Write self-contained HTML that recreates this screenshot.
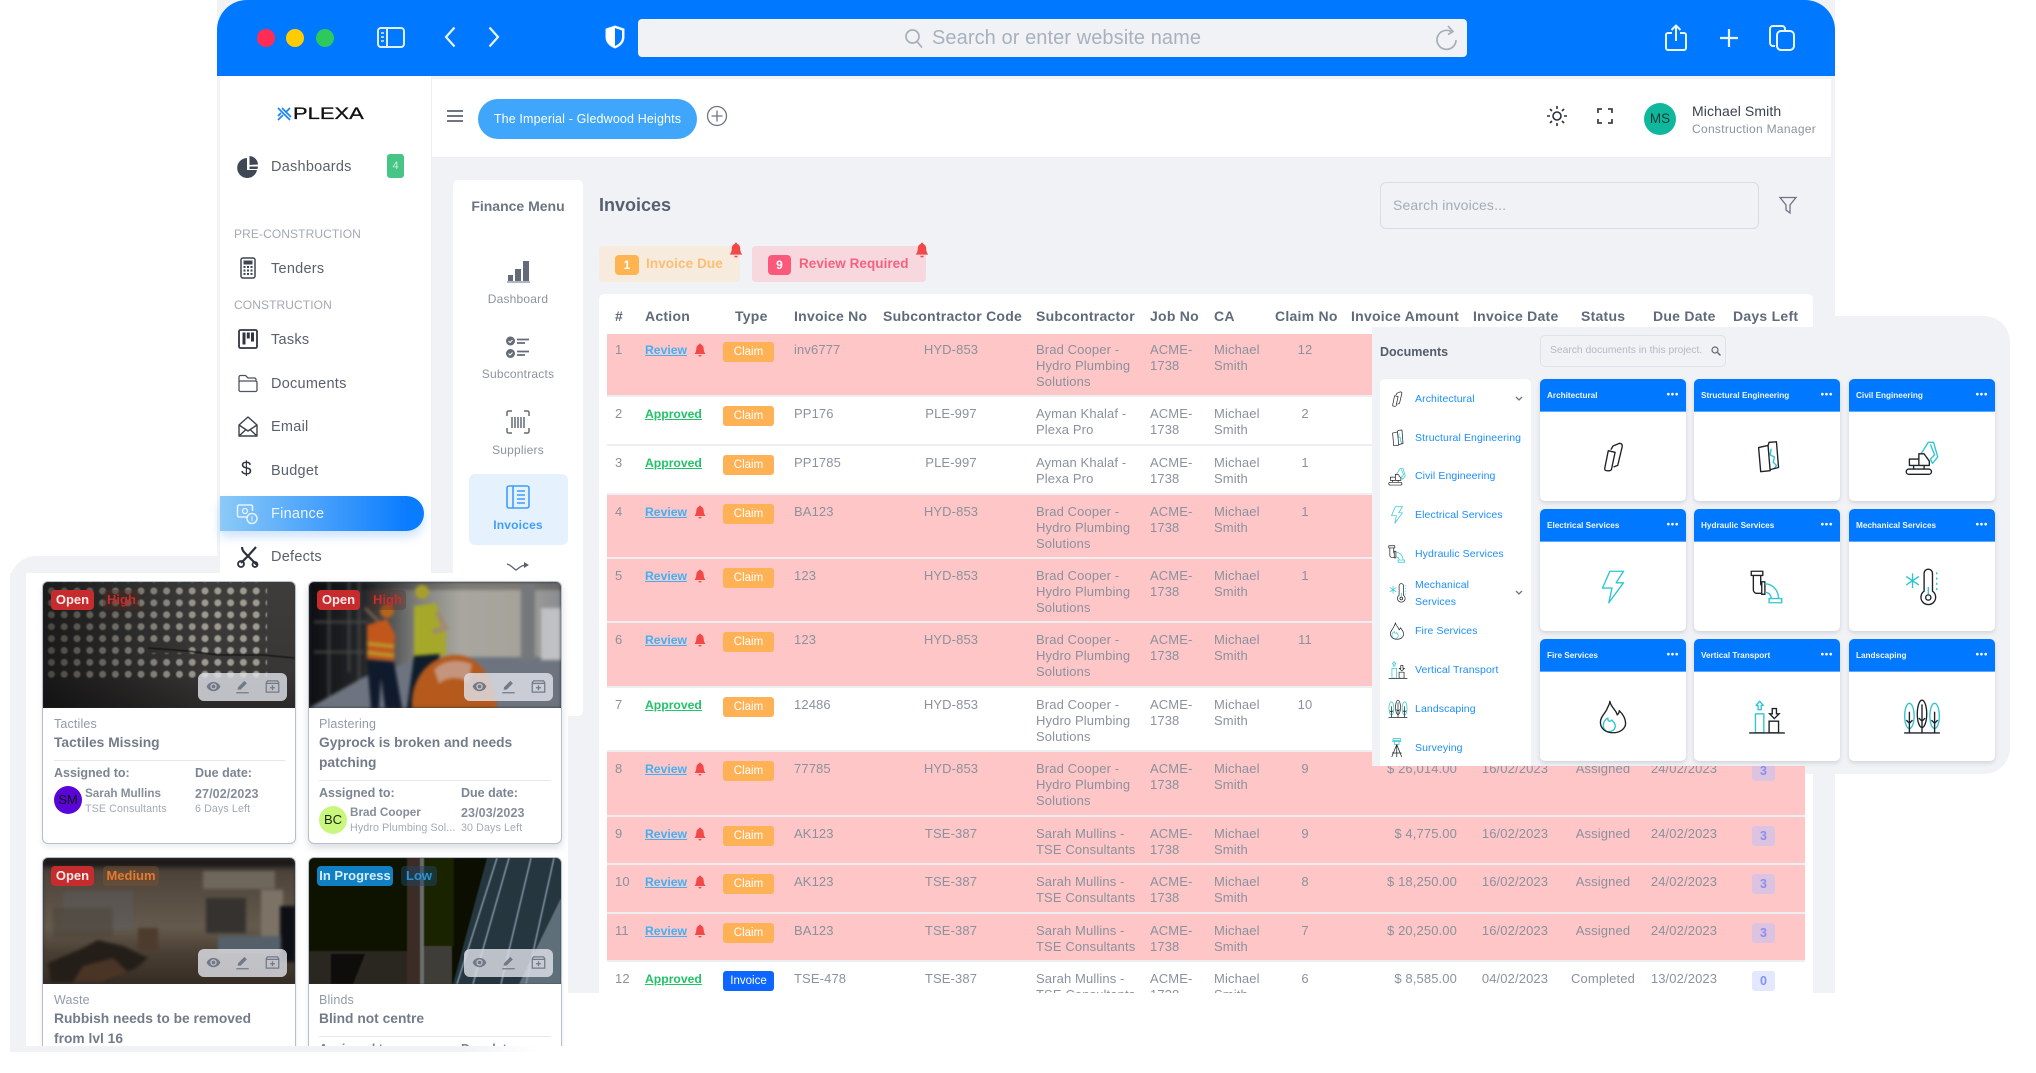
<!DOCTYPE html>
<html><head><meta charset="utf-8"><title>Plexa</title>
<style>
*{box-sizing:border-box}
html,body{margin:0;padding:0;background:#fff}
body{width:2036px;height:1073px;position:relative;overflow:hidden;font-family:"Liberation Sans",sans-serif;color:#8a909d}
.t{position:absolute;white-space:nowrap}
.b{position:absolute}
svg{position:absolute;overflow:visible}
.nav{font-size:14.5px;line-height:20px;color:#5a606c;letter-spacing:.25px}
.sec{font-size:12px;line-height:16px;color:#a3a9b5;letter-spacing:.1px}
.fm{font-size:12px;line-height:16px;color:#8b93a1;width:130px;left:453px;text-align:center;letter-spacing:.2px}
#tbl{position:absolute;left:599px;top:294px;width:1214px;height:699px;background:#fff;overflow:hidden;border-radius:5px 5px 0 0}
#tbl h6{position:absolute;top:12px;margin:0;font-size:14px;line-height:20px;font-weight:700;color:#5f6a7a;white-space:nowrap;letter-spacing:.25px}
.r{position:absolute;left:8px;width:1198px;border-bottom:2px solid #eceef2;background:#fff}
.p{background:#fec6c6}
.r i{position:absolute;top:9px;font-style:normal;font-size:13px;line-height:16px;color:#8b919e;white-space:nowrap;letter-spacing:.12px}
.n{left:8px}.ino{left:187px}.code{left:244px;width:200px;text-align:center}.sub{left:429px}.job{left:543px}.ca{left:607px}
.cl{left:658px;width:80px;text-align:center}.am{left:750px;width:100px;text-align:right}.dt{left:858px;width:100px;text-align:center}.st{left:946px;width:100px;text-align:center}.du{left:1027px;width:100px;text-align:center}
.r u{position:absolute;top:9px;left:38px;font-size:12.2px;line-height:16px;font-weight:700;white-space:nowrap}
.rv{color:#41b1f4}.ap{color:#22c268}
.ty{position:absolute;left:116px;top:9px;width:51px;height:20px;border-radius:3px;background:#ffb155;color:#fff;font-size:11.5px;line-height:20px;text-align:center;font-weight:400}
.inv{background:#0d66ff}
.dy{position:absolute;left:1145px;top:9px;width:23px;height:20px;border-radius:3px;background:#dcc3df;color:#8d8df0;font-size:12.5px;line-height:20px;text-align:center;font-weight:700}
.bl{left:87px;top:10px;width:12px;height:14px}
.r.f i,.r.f u,.r.f .ty{top:8px}.r.f .bl{top:9px}
#docs{position:absolute;left:1372px;top:316px;width:638px;height:458px;background:#f1f2f6;border-radius:0 26px 26px 0;clip-path:polygon(0 11px,441px 11px,441px 0,100% 0,100% 100%,433px 100%,433px 450px,0 450px)}
.li{position:absolute;left:1415px;font-size:10.5px;line-height:16px;color:#1c8dfb;white-space:nowrap;letter-spacing:.1px}
.tile{position:absolute;width:146px;height:122px;background:#fff;border-radius:5px;box-shadow:0 2px 4px rgba(80,90,110,.2);overflow:hidden}
.tile div{height:33px;background:#0078ff;border-bottom:1px solid #5aa8ff;color:#eef6ff;font-size:8.2px;font-weight:700;line-height:34px;padding-left:7px;position:relative;white-space:nowrap}
.tile div b{position:absolute;right:7px;top:-1px;font-size:6.5px;letter-spacing:.3px;color:#fff}
.tile svg{left:52px;top:57px;width:42px;height:42px}
.card{position:absolute;background:#fff;border:1.5px solid #b7bfcd;border-radius:6px;overflow:hidden;box-shadow:0 3px 6px rgba(90,100,120,.12)}
.img{position:absolute;left:0;top:0;width:100%;height:126px;overflow:hidden;background:#333}
.img svg{left:0;top:0;width:100%;height:100%;filter:blur(.6px)}
.img svg.s{filter:blur(1.6px)}
.tag{position:absolute;top:8px;height:20px;border-radius:4px;font-size:13px;font-weight:700;line-height:20px;text-align:center;white-space:nowrap}
.act{position:absolute;top:91px;width:89px;height:28px;border-radius:6px;background:rgba(222,225,232,.82)}
.act svg{top:6px;width:15px;height:15px}
.cat{position:absolute;font-size:12.5px;line-height:16px;color:#929aa8;white-space:nowrap;letter-spacing:.15px}
.ttl{position:absolute;font-size:13.8px;line-height:20px;font-weight:700;color:#737b8a;white-space:nowrap}
.lb{position:absolute;font-size:12.5px;line-height:16px;font-weight:700;color:#7c8494;white-space:nowrap}
.vl{position:absolute;font-size:12.5px;line-height:16px;font-weight:700;color:#858d9b;white-space:nowrap;letter-spacing:.1px}
.nm{font-size:11.7px;letter-spacing:0}
.sm{position:absolute;font-size:10.7px;line-height:14px;color:#a3aab6;white-space:nowrap;letter-spacing:.1px}
</style></head><body>
<svg width="0" height="0" style="left:0;top:0">
<defs>
<symbol id="bell" viewBox="0 0 12 14"><path d="M6 0.5c.7 0 1 .5 1 1.1C9 2.2 9.6 4 9.7 6c.1 2.5.9 3.9 1.8 5H.5c.9-1.1 1.7-2.5 1.8-5C2.4 4 3 2.2 5 1.6 5 1 5.3.5 6 .5zM4.5 12h3a1.5 1.5 0 0 1-3 0z" fill="#f24848"/></symbol>
<symbol id="i-arch" viewBox="0 0 40 40"><g fill="none" stroke="#1d2228" stroke-width="1.300" stroke-linejoin="round"><path d="M14 33c-1.800 0-2-1-1.800-2.500L15.500 14l6.500 1.500L18.500 32c-.5 1-2.500 1.500-4.500 1z"/><path d="M18 13l2-3.500L26 7c2 0 3 1 2.800 3L24.500 28l-4 1.500"/></g></symbol>
<symbol id="i-str" viewBox="0 0 40 40"><path d="M24 12l-1 6 4 2-1 5 3 3-2 3" fill="none" stroke="#30c5cf" stroke-width="1.300"/><g fill="none" stroke="#1d2228" stroke-width="1.300" stroke-linejoin="round"><path d="M12 11l9-2 2 24-9 1z"/><path d="M21 9l1-3 7-.5 2 24.500-8 2"/></g></symbol>
<symbol id="i-civ" viewBox="0 0 40 40"><path d="M19 17L26 6h5l4 14-5 6-2-4 4-4-4-10" fill="none" stroke="#30c5cf" stroke-width="1.300" stroke-linejoin="round"/><g fill="none" stroke="#1d2228" stroke-width="1.300" stroke-linejoin="round"><rect x="5" y="31.500" width="24" height="5" rx="2.500"/><path d="M8 22h9v6H8zM17 28V17h5l5 7v4zM12 28v3.500M22 28v3.500"/></g></symbol>
<symbol id="i-ele" viewBox="0 0 40 40"><path d="M17 5h13l-7 11h7L16 35l3-14h-9z" fill="none" stroke="#30c5cf" stroke-width="1.300" stroke-linejoin="round"/></symbol>
<symbol id="i-hyd" viewBox="0 0 40 40"><g fill="none" stroke="#1d2228" stroke-width="1.300" stroke-linejoin="round"><path d="M5 5h11v4H5zM7 9v14c0 2 2 3 3 3h5M14 9v8c0 1 1 2 1 2M15 15h3v12h-3z"/></g><path d="M18 17c8 0 13 7 13 14M18 25c3 0 6 2 6 6M22 31h12v4H22z" fill="none" stroke="#30c5cf" stroke-width="1.300"/></symbol>
<symbol id="i-mec" viewBox="0 0 40 40"><path d="M11 7v14M5 10l12 8M17 10L5 18M26 20v7M34 6v2M34 11v2M34 16v2M34 21v2" fill="none" stroke="#30c5cf" stroke-width="1.300"/><g fill="none" stroke="#1d2228" stroke-width="1.300"><path d="M22 24V7a4 4 0 0 1 8 0v17a7 7 0 1 1-8 0z"/><circle cx="26" cy="30" r="2.500"/></g></symbol>
<symbol id="i-fir" viewBox="0 0 40 40"><path d="M11 30c-1-5 2-8 4-9 0 3 2 4 4 2 1 1 4 4 3 7-1 3-4 4-7 4-2 0-3-2-4-4z" fill="none" stroke="#30c5cf" stroke-width="1.300"/><path d="M17 5c1 6 6 8 7 13 1-1 2-2 2-4 4 4 6 8 6 12 0 5-5 9-12 9S8 31 8 25c0-5 4-8 6-12 1-3 3-5 3-8z" fill="none" stroke="#1d2228" stroke-width="1.300" stroke-linejoin="round"/></symbol>
<symbol id="i-ver" viewBox="0 0 40 40"><path d="M9 17h8v18H9zM13 5l3.500 4h-2v4h-3V9h-2z" fill="none" stroke="#30c5cf" stroke-width="1.300" stroke-linejoin="round"/><path d="M22 24h9v11h-9zM25 12h4v5h2.500l-4.500 4.500-4.500-4.500H25zM3 35.200h34" fill="none" stroke="#1d2228" stroke-width="1.300"/></symbol>
<symbol id="i-lan" viewBox="0 0 40 40"><g fill="none" stroke="#30c5cf" stroke-width="1.300"><ellipse cx="8" cy="19" rx="4.500" ry="12"/><ellipse cx="32" cy="19" rx="4.500" ry="12"/></g><g fill="none" stroke="#1d2228" stroke-width="1.300"><ellipse cx="20" cy="17" rx="4.500" ry="13"/><path d="M8 15v20M20 8v27M32 15v20M3 35.200h34M5 23l3 3 3-3M17 21l3 3 3-3M29 23l3 3 3-3"/></g></symbol>
<symbol id="i-sur" viewBox="0 0 40 40"><rect x="12" y="1" width="15" height="4" fill="none" stroke="#30c5cf" stroke-width="1.500"/><path d="M10 7h19M15 7v6h9V7" fill="none" stroke="#30c5cf" stroke-width="1.500"/><path d="M19.500 13l-10 25M19.500 13l10 25M19.500 13v25M10 30h19" fill="none" stroke="#1d2228" stroke-width="1.500"/></symbol>
<symbol id="eye" viewBox="0 0 24 24"><path d="M12 4.500C7 4.500 2.700 7.600 1 12c1.700 4.400 6 7.500 11 7.500s9.300-3.100 11-7.500c-1.700-4.400-6-7.500-11-7.500zm0 12.500a5 5 0 1 1 0-10 5 5 0 0 1 0 10zm0-8a3 3 0 1 0 0 6 3 3 0 0 0 0-6z" fill="#727a88"/></symbol>
<symbol id="pen" viewBox="0 0 24 24"><path d="M4 17l1-4L15 3l4 4L9 17zM2 21h20v2H2z" fill="#727a88"/></symbol>
<symbol id="box" viewBox="0 0 24 24"><path d="M4 3h16l2 3v15H2V6zM3 7h18M12 10v8M8 14h8" fill="none" stroke="#727a88" stroke-width="2"/></symbol>
</defs></svg>

<!-- browser frame -->
<div class="b" style="left:217px;top:0;width:1618px;height:993px;background:#f0f2f6"></div>
<div class="b" style="left:217px;top:0;width:1618px;height:76px;background:#0078ff;border-radius:30px 30px 0 0"></div>
<div class="b" style="left:257px;top:29px;width:18px;height:18px;border-radius:50%;background:#ff2d55"></div>
<div class="b" style="left:286px;top:29px;width:18px;height:18px;border-radius:50%;background:#ffcc00"></div>
<div class="b" style="left:316px;top:29px;width:18px;height:18px;border-radius:50%;background:#2fc85c"></div>
<svg style="left:377px;top:27px" width="28" height="21" viewBox="0 0 28 21"><rect x="1" y="1" width="26" height="19" rx="3" fill="none" stroke="#dfeeff" stroke-width="2"/><path d="M10 1v19" stroke="#dfeeff" stroke-width="2"/><path d="M4 6h3M4 10h3M4 14h3" stroke="#dfeeff" stroke-width="1.500"/></svg>
<svg style="left:444px;top:26px" width="12" height="22" viewBox="0 0 12 22"><path d="M10.500 1.500L2 11l8.500 9.500" fill="none" stroke="#eaf4ff" stroke-width="2.200"/></svg>
<svg style="left:488px;top:26px" width="12" height="22" viewBox="0 0 12 22"><path d="M1.500 1.500L10 11l-8.500 9.500" fill="none" stroke="#eaf4ff" stroke-width="2.200"/></svg>
<svg style="left:605px;top:25px" width="20" height="24" viewBox="0 0 20 24"><path d="M10 1l9 3v8c0 6-4 9-9 11-5-2-9-5-9-11V4z" fill="#fff" stroke="#e8f2ff"/><path d="M10 3l7 2.500V12c0 4.500-3 7-7 9z" fill="#0078ff"/></svg>
<div class="b" style="left:638px;top:19px;width:829px;height:38px;background:#f0f2f6;border-radius:4px"></div>
<svg style="left:904px;top:28px" width="20" height="21" viewBox="0 0 20 21"><circle cx="8.500" cy="8.500" r="6.500" fill="none" stroke="#a6aeba" stroke-width="1.700"/><path d="M13 13.500l5 6" stroke="#a6aeba" stroke-width="1.700"/></svg>
<div class="t" style="left:932px;top:26px;font-size:20px;line-height:25px;color:#a9b1bd;letter-spacing:.08px">Search or enter website name</div>
<svg style="left:1437px;top:25px" width="22" height="26" viewBox="0 0 22 26"><path d="M15 6.500A9.500 9.500 0 1 0 20 15" fill="none" stroke="#a6aeba" stroke-width="1.700" transform="translate(-1,0)"/><path d="M11 1l5 5.500-5 3" fill="none" stroke="#a6aeba" stroke-width="1.700"/></svg>
<svg style="left:1665px;top:24px" width="22" height="27" viewBox="0 0 22 27"><path d="M7 9H3a2 2 0 0 0-2 2v13a2 2 0 0 0 2 2h16a2 2 0 0 0 2-2V11a2 2 0 0 0-2-2h-4M11 17V1.500M6.500 6L11 1.500 15.500 6" fill="none" stroke="#eaf4ff" stroke-width="2"/></svg>
<svg style="left:1719px;top:28px" width="20" height="20" viewBox="0 0 20 20"><path d="M10 1v18M1 10h18" stroke="#eaf4ff" stroke-width="2.200"/></svg>
<svg style="left:1769px;top:25px" width="26" height="26" viewBox="0 0 26 26"><rect x="8" y="6" width="17" height="19" rx="4" fill="none" stroke="#eaf4ff" stroke-width="2"/><path d="M6 21H4a3 3 0 0 1-3-3V4a3 3 0 0 1 3-3h9a3 3 0 0 1 3 3v2" fill="none" stroke="#eaf4ff" stroke-width="2"/></svg>

<!-- header -->
<div class="b" style="left:432px;top:79px;width:1399px;height:79px;background:#fff;border-bottom:1px solid #eceef2"></div>
<svg style="left:447px;top:110px" width="16" height="12" viewBox="0 0 16 12"><path d="M0 1h16M0 6h16M0 11h16" stroke="#5b6370" stroke-width="1.800"/></svg>
<div class="t" style="left:478px;top:99px;width:219px;height:40px;border-radius:20px;background:#3fa6fb;color:#fff;font-size:12.5px;line-height:40px;text-align:center;letter-spacing:.15px">The Imperial - Gledwood Heights</div>
<svg style="left:706px;top:105px" width="22" height="22" viewBox="0 0 22 22"><circle cx="11" cy="11" r="9.500" fill="none" stroke="#6d7482" stroke-width="1.300"/><path d="M11 5.500v11M5.500 11h11" stroke="#6d7482" stroke-width="1.300"/></svg>
<svg style="left:1546px;top:105px" width="22" height="22" viewBox="0 0 22 22"><circle cx="11" cy="11" r="4" fill="none" stroke="#2b303a" stroke-width="1.600"/><path d="M11 1v3M11 18v3M1 11h3M18 11h3M4 4l2 2M16 16l2 2M4 18l2-2M16 6l2-2" stroke="#2b303a" stroke-width="1.600"/></svg>
<svg style="left:1597px;top:108px" width="16" height="16" viewBox="0 0 16 16"><path d="M1 5V1h4M11 1h4v4M15 11v4h-4M5 15H1v-4" fill="none" stroke="#3d4552" stroke-width="1.800"/></svg>
<div class="t" style="left:1644px;top:103px;width:32px;height:32px;border-radius:50%;background:#0fb89c;color:#0f3d3a;font-size:13.5px;line-height:32px;text-align:center">MS</div>
<div class="t" style="left:1692px;top:101px;font-size:14px;line-height:20px;color:#3a414d;letter-spacing:.1px">Michael Smith</div>
<div class="t" style="left:1692px;top:121px;font-size:12px;line-height:16px;color:#8b93a1;letter-spacing:.3px">Construction Manager</div>

<!-- sidebar -->
<div class="b" style="left:220px;top:76px;width:212px;height:917px;background:#fff;border-right:1px solid #eef0f3"></div>
<svg style="left:277px;top:107px" width="15" height="14" viewBox="0 0 15 14"><path d="M1 1l12 12M5 1l9 9M1 13l5-5M1 9l3-3M9 5l4-4" fill="none" stroke="#1a86f5" stroke-width="1.700"/></svg>
<div class="t" style="left:293px;top:104px;font-size:17px;line-height:20px;color:#111;-webkit-text-stroke:.3px #111;transform:scaleX(1.29);transform-origin:0 50%">PLEXA</div>
<svg style="left:237px;top:155px" width="22" height="24" viewBox="0 0 22 24"><path d="M10 3a10 10 0 1 0 10 12H10z" fill="#3f4654"/><path d="M12.500 1a9 9 0 0 1 8.500 8.500l-8.500.5z" fill="#3f4654"/><path d="M12.500 11.500H21a9 9 0 0 1-.6 2.500h-7.900z" fill="#3f4654"/></svg>
<div class="t nav" style="left:271px;top:157px">Dashboards</div>
<div class="t" style="left:387px;top:154px;width:17px;height:24px;border-radius:3px;background:#46c587;color:#cdf1df;font-size:11px;line-height:24px;text-align:center">4</div>
<div class="t sec" style="left:234px;top:226px">PRE-CONSTRUCTION</div>
<svg style="left:240px;top:257px" width="16" height="22" viewBox="0 0 16 22"><rect x="1" y="1" width="14" height="20" rx="2" fill="none" stroke="#3f4654" stroke-width="1.500"/><rect x="3.500" y="3.500" width="9" height="4" fill="#3f4654"/><path d="M3.500 10h2M7 10h2M10.500 10h2M3.500 13.500h2M7 13.500h2M10.500 13.500h2M3.500 17h2M7 17h2M10.500 17h2" stroke="#3f4654" stroke-width="2"/></svg>
<div class="t nav" style="left:271px;top:259px">Tenders</div>
<div class="t sec" style="left:234px;top:297px">CONSTRUCTION</div>
<svg style="left:238px;top:329px" width="20" height="20" viewBox="0 0 20 20"><rect x="1" y="1" width="18" height="18" rx="1.500" fill="none" stroke="#2f3540" stroke-width="1.800"/><path d="M4.500 3.500h3v12h-3zM8.800 3.500h3v6h-3zM13 3.500h3v9h-3z" fill="#2f3540"/></svg>
<div class="t nav" style="left:271px;top:330px">Tasks</div>
<svg style="left:238px;top:374px" width="20" height="19" viewBox="0 0 20 19"><path d="M1 16V3a1.500 1.500 0 0 1 1.500-1.500h5L10 4h6.500A1.500 1.500 0 0 1 18 5.500V7M1 16a1.500 1.500 0 0 0 1.500 1.500h15A1.500 1.500 0 0 0 19 16V8.500A1.500 1.500 0 0 0 17.500 7h-15A1.500 1.500 0 0 0 1 8.500" fill="none" stroke="#4c5361" stroke-width="1.300"/></svg>
<div class="t nav" style="left:271px;top:374px">Documents</div>
<svg style="left:238px;top:416px" width="20" height="21" viewBox="0 0 20 21"><path d="M1 9L10 1l9 8v11H1zM1 9l9 6 9-6M1 20l7-6.500M19 20l-7-6.500" fill="none" stroke="#3a414d" stroke-width="1.400" stroke-linejoin="round"/></svg>
<div class="t nav" style="left:271px;top:417px">Email</div>
<div class="t" style="left:241px;top:458px;font-size:19px;line-height:24px;color:#2f3540">$</div>
<div class="t nav" style="left:271px;top:461px">Budget</div>
<div class="b" style="left:220px;top:496px;width:204px;height:35px;background:linear-gradient(90deg,#8ccaf7,#0a7cff 92%);border-radius:0 18px 18px 0;box-shadow:0 6px 10px rgba(30,130,240,.22)"></div>
<svg style="left:236px;top:503px" width="22" height="22" viewBox="0 0 22 22"><path d="M12 14H3a1.500 1.500 0 0 1-1.500-1.500v-9A1.500 1.500 0 0 1 3 2h12a1.500 1.500 0 0 1 1.500 1.500V8" fill="none" stroke="#e6f2ff" stroke-width="1.500"/><circle cx="9" cy="8" r="2.500" fill="none" stroke="#e6f2ff" stroke-width="1.300"/><circle cx="16" cy="15.500" r="5" fill="none" stroke="#e6f2ff" stroke-width="1.500"/><path d="M16 13v5" stroke="#e6f2ff"/></svg>
<div class="t nav" style="left:271px;top:504px;color:#e9f4ff">Finance</div>
<svg style="left:237px;top:546px" width="22" height="22" viewBox="0 0 22 22"><path d="M5 1c0 4 3 6 6 9l9 9M19 1l-8 9-7 7" fill="none" stroke="#2b303a" stroke-width="2.200"/><circle cx="4" cy="18" r="3" fill="none" stroke="#2b303a" stroke-width="1.800"/><circle cx="18" cy="18.500" r="2.500" fill="none" stroke="#2b303a" stroke-width="1.800"/></svg>
<div class="t nav" style="left:271px;top:547px">Defects</div>

<!-- finance menu -->
<div class="b" style="left:453px;top:180px;width:130px;height:536px;background:#fff;border-radius:5px"></div>
<div class="t" style="left:453px;width:130px;text-align:center;top:196px;font-size:14px;line-height:20px;font-weight:700;color:#6c7584">Finance Menu</div>
<svg style="left:506px;top:260px" width="24" height="23" viewBox="0 0 24 23"><path d="M2 15h5v6H2zM9 9h6v12H9zM17 1h6v20h-6z" fill="#636b79"/><path d="M1 22h23" stroke="#636b79" stroke-width="1"/></svg>
<div class="t fm" style="top:291px">Dashboard</div>
<svg style="left:506px;top:336px" width="24" height="23" viewBox="0 0 24 23"><circle cx="4.500" cy="5" r="4.500" fill="#636b79"/><circle cx="4.500" cy="17.500" r="4.500" fill="#636b79"/><path d="M2.500 5l1.500 1.500 2.500-2.500M2.500 17.500L4 19l2.500-2.500" fill="none" stroke="#fff" stroke-width="1"/><path d="M11 3.500h12M11 7h8M11 15.500h12M11 19h8" stroke="#636b79" stroke-width="1.800"/></svg>
<div class="t fm" style="top:366px">Subcontracts</div>
<svg style="left:506px;top:410px" width="24" height="24" viewBox="0 0 24 24"><path d="M1 6V2.500A1.500 1.500 0 0 1 2.500 1H6M18 1h3.500A1.500 1.500 0 0 1 23 2.500V6M23 18v3.500a1.500 1.500 0 0 1-1.500 1.500H18M6 23H2.500A1.500 1.500 0 0 1 1 21.500V18" fill="none" stroke="#636b79" stroke-width="1.500"/><path d="M6 7v11M9 7v11M12 7v11M15 7v11M18 7v11" stroke="#636b79" stroke-width="1.500"/></svg>
<div class="t fm" style="top:442px">Suppliers</div>
<div class="b" style="left:469px;top:474px;width:99px;height:71px;background:#e6f1fe;border-radius:6px"></div>
<svg style="left:506px;top:485px" width="24" height="24" viewBox="0 0 24 24"><rect x="1" y="1" width="22" height="22" rx="2" fill="none" stroke="#3f9efb" stroke-width="1.600"/><path d="M7 1v22M11 6h8M11 10h8M11 14h8M11 18h8" stroke="#3f9efb" stroke-width="1.600"/></svg>
<div class="t fm" style="top:517px;color:#3f9efb;font-weight:700">Invoices</div>
<svg style="left:506px;top:561px" width="24" height="12" viewBox="0 0 24 12"><path d="M1 3c4 1 7 5 9 6 2-1 5-5 10-5" fill="none" stroke="#5a6270" stroke-width="1.300"/><path d="M18 1l5 3-5 3z" fill="#5a6270"/></svg>

<!-- invoices heading -->
<div class="t" style="left:599px;top:193px;font-size:18px;line-height:24px;font-weight:700;color:#566070">Invoices</div>
<div class="b" style="left:1380px;top:182px;width:379px;height:47px;border:1.500px solid #d8dce3;border-radius:6px"></div>
<div class="t" style="left:1393px;top:195px;font-size:14px;line-height:20px;color:#a4abb7;letter-spacing:.15px">Search invoices...</div>
<svg style="left:1779px;top:196px" width="18" height="18" viewBox="0 0 18 18"><path d="M1 1.500h16L11 9v8l-4-3V9z" fill="none" stroke="#6d7482" stroke-width="1.300"/></svg>

<div class="b" style="left:599px;top:246px;width:141px;height:36px;background:#f6ebdc;border-radius:4px"></div>
<div class="t" style="left:615px;top:255px;width:24px;height:20px;background:#ffb450;border-radius:4px;color:#fff;font-size:12px;font-weight:700;line-height:20px;text-align:center">1</div>
<div class="t" style="left:646px;top:254px;font-size:13.5px;font-weight:700;line-height:20px;color:#fdbe72;letter-spacing:.1px">Invoice Due</div>
<div class="b" style="left:752px;top:246px;width:174px;height:36px;background:#f6d8de;border-radius:4px"></div>
<div class="t" style="left:768px;top:255px;width:23px;height:20px;background:#fb587c;border-radius:4px;color:#fff;font-size:12px;font-weight:700;line-height:20px;text-align:center">9</div>
<div class="t" style="left:799px;top:254px;font-size:13.5px;font-weight:700;line-height:20px;color:#f6617f;letter-spacing:.05px">Review Required</div>
<svg style="left:729px;top:242px" width="14" height="16" viewBox="0 0 12 14"><use href="#bell"/></svg>
<svg style="left:915px;top:242px" width="14" height="16" viewBox="0 0 12 14"><use href="#bell"/></svg>

<!-- table -->
<div id="tbl">
<h6 style="left:16px">#</h6><h6 style="left:46px">Action</h6><h6 style="left:136px">Type</h6><h6 style="left:195px">Invoice No</h6><h6 style="left:284px">Subcontractor Code</h6><h6 style="left:437px">Subcontractor</h6><h6 style="left:551px">Job No</h6><h6 style="left:615px">CA</h6><h6 style="left:676px">Claim No</h6><h6 style="left:752px">Invoice Amount</h6><h6 style="left:874px">Invoice Date</h6><h6 style="left:982px">Status</h6><h6 style="left:1054px">Due Date</h6><h6 style="left:1134px">Days Left</h6>

<div class="r p f" style="top:40px;height:63px"><i class="n">1</i><u class="rv">Review</u><svg class="bl" viewBox="0 0 12 14"><use href="#bell"/></svg><b class="ty">Claim</b><i class="ino">inv6777</i><i class="code">HYD-853</i><i class="sub">Brad Cooper -<br>Hydro Plumbing<br>Solutions</i><i class="job">ACME-<br>1738</i><i class="ca">Michael<br>Smith</i><i class="cl">12</i></div>
<div class="r" style="top:103px;height:49px"><i class="n">2</i><u class="ap">Approved</u><b class="ty">Claim</b><i class="ino">PP176</i><i class="code">PLE-997</i><i class="sub">Ayman Khalaf -<br>Plexa Pro</i><i class="job">ACME-<br>1738</i><i class="ca">Michael<br>Smith</i><i class="cl">2</i></div>
<div class="r" style="top:152px;height:49px"><i class="n">3</i><u class="ap">Approved</u><b class="ty">Claim</b><i class="ino">PP1785</i><i class="code">PLE-997</i><i class="sub">Ayman Khalaf -<br>Plexa Pro</i><i class="job">ACME-<br>1738</i><i class="ca">Michael<br>Smith</i><i class="cl">1</i></div>
<div class="r p" style="top:201px;height:64px"><i class="n">4</i><u class="rv">Review</u><svg class="bl" viewBox="0 0 12 14"><use href="#bell"/></svg><b class="ty">Claim</b><i class="ino">BA123</i><i class="code">HYD-853</i><i class="sub">Brad Cooper -<br>Hydro Plumbing<br>Solutions</i><i class="job">ACME-<br>1738</i><i class="ca">Michael<br>Smith</i><i class="cl">1</i></div>
<div class="r p" style="top:265px;height:64px"><i class="n">5</i><u class="rv">Review</u><svg class="bl" viewBox="0 0 12 14"><use href="#bell"/></svg><b class="ty">Claim</b><i class="ino">123</i><i class="code">HYD-853</i><i class="sub">Brad Cooper -<br>Hydro Plumbing<br>Solutions</i><i class="job">ACME-<br>1738</i><i class="ca">Michael<br>Smith</i><i class="cl">1</i></div>
<div class="r p" style="top:329px;height:65px"><i class="n">6</i><u class="rv">Review</u><svg class="bl" viewBox="0 0 12 14"><use href="#bell"/></svg><b class="ty">Claim</b><i class="ino">123</i><i class="code">HYD-853</i><i class="sub">Brad Cooper -<br>Hydro Plumbing<br>Solutions</i><i class="job">ACME-<br>1738</i><i class="ca">Michael<br>Smith</i><i class="cl">11</i></div>
<div class="r" style="top:394px;height:64px"><i class="n">7</i><u class="ap">Approved</u><b class="ty">Claim</b><i class="ino">12486</i><i class="code">HYD-853</i><i class="sub">Brad Cooper -<br>Hydro Plumbing<br>Solutions</i><i class="job">ACME-<br>1738</i><i class="ca">Michael<br>Smith</i><i class="cl">10</i></div>
<div class="r p" style="top:458px;height:65px"><i class="n">8</i><u class="rv">Review</u><svg class="bl" viewBox="0 0 12 14"><use href="#bell"/></svg><b class="ty">Claim</b><i class="ino">77785</i><i class="code">HYD-853</i><i class="sub">Brad Cooper -<br>Hydro Plumbing<br>Solutions</i><i class="job">ACME-<br>1738</i><i class="ca">Michael<br>Smith</i><i class="cl">9</i><i class="am">$ 26,014.00</i><i class="dt">16/02/2023</i><i class="st">Assigned</i><i class="du">24/02/2023</i><b class="dy">3</b></div>
<div class="r p" style="top:523px;height:48px"><i class="n">9</i><u class="rv">Review</u><svg class="bl" viewBox="0 0 12 14"><use href="#bell"/></svg><b class="ty">Claim</b><i class="ino">AK123</i><i class="code">TSE-387</i><i class="sub">Sarah Mullins -<br>TSE Consultants</i><i class="job">ACME-<br>1738</i><i class="ca">Michael<br>Smith</i><i class="cl">9</i><i class="am">$ 4,775.00</i><i class="dt">16/02/2023</i><i class="st">Assigned</i><i class="du">24/02/2023</i><b class="dy">3</b></div>
<div class="r p" style="top:571px;height:49px"><i class="n">10</i><u class="rv">Review</u><svg class="bl" viewBox="0 0 12 14"><use href="#bell"/></svg><b class="ty">Claim</b><i class="ino">AK123</i><i class="code">TSE-387</i><i class="sub">Sarah Mullins -<br>TSE Consultants</i><i class="job">ACME-<br>1738</i><i class="ca">Michael<br>Smith</i><i class="cl">8</i><i class="am">$ 18,250.00</i><i class="dt">16/02/2023</i><i class="st">Assigned</i><i class="du">24/02/2023</i><b class="dy">3</b></div>
<div class="r p" style="top:620px;height:48px"><i class="n">11</i><u class="rv">Review</u><svg class="bl" viewBox="0 0 12 14"><use href="#bell"/></svg><b class="ty">Claim</b><i class="ino">BA123</i><i class="code">TSE-387</i><i class="sub">Sarah Mullins -<br>TSE Consultants</i><i class="job">ACME-<br>1738</i><i class="ca">Michael<br>Smith</i><i class="cl">7</i><i class="am">$ 20,250.00</i><i class="dt">16/02/2023</i><i class="st">Assigned</i><i class="du">24/02/2023</i><b class="dy">3</b></div>
<div class="r" style="top:668px;height:50px"><i class="n">12</i><u class="ap">Approved</u><b class="ty inv">Invoice</b><i class="ino">TSE-478</i><i class="code">TSE-387</i><i class="sub">Sarah Mullins -<br>TSE Consultants</i><i class="job">ACME-<br>1738</i><i class="ca">Michael<br>Smith</i><i class="cl">6</i><i class="am">$ 8,585.00</i><i class="dt">04/02/2023</i><i class="st">Completed</i><i class="du">13/02/2023</i><b class="dy" style="background:#e3e8ff;color:#7f91f5">0</b></div>
</div>

<!-- documents panel -->
<div id="docs"></div>
<div class="t" style="left:1380px;top:342px;font-size:12.5px;line-height:20px;font-weight:700;color:#525c6b">Documents</div>
<div class="b" style="left:1540px;top:335px;width:186px;height:32px;border:1.500px solid #dfe2e8;border-radius:5px"></div>
<div class="t" style="left:1550px;top:344px;font-size:10.300px;line-height:14px;color:#b3b9c3">Search documents in this project.</div>
<svg style="left:1711px;top:346px" width="10" height="10" viewBox="0 0 10 10"><circle cx="4" cy="4" r="3" fill="none" stroke="#5f6775" stroke-width="1.200"/><path d="M6.500 6.500L9.500 9.500" stroke="#5f6775" stroke-width="1.400"/></svg>
<div class="b" style="left:1380px;top:379px;width:151px;height:387px;background:#fff;border-radius:5px 5px 0 0"></div>
<svg style="left:1386px;top:388px" width="22" height="22"><use href="#i-arch"/></svg><div class="li" style="top:391px">Architectural</div>
<svg style="left:1386px;top:427px" width="22" height="22"><use href="#i-str"/></svg><div class="li" style="top:430px">Structural Engineering</div>
<svg style="left:1386px;top:465px" width="22" height="22"><use href="#i-civ"/></svg><div class="li" style="top:468px">Civil Engineering</div>
<svg style="left:1386px;top:504px" width="22" height="22"><use href="#i-ele"/></svg><div class="li" style="top:507px">Electrical Services</div>
<svg style="left:1386px;top:543px" width="22" height="22"><use href="#i-hyd"/></svg><div class="li" style="top:546px">Hydraulic Services</div>
<svg style="left:1387px;top:582px" width="22" height="22"><use href="#i-mec"/></svg><div class="li" style="top:577px;line-height:17px">Mechanical<br>Services</div>
<svg style="left:1386px;top:620px" width="22" height="22"><use href="#i-fir"/></svg><div class="li" style="top:623px">Fire Services</div>
<svg style="left:1387px;top:659px" width="22" height="22"><use href="#i-ver"/></svg><div class="li" style="top:662px">Vertical Transport</div>
<svg style="left:1387px;top:698px" width="22" height="22"><use href="#i-lan"/></svg><div class="li" style="top:701px">Landscaping</div>
<svg style="left:1387px;top:738px" width="20" height="20"><use href="#i-sur"/></svg><div class="li" style="top:740px">Surveying</div>
<svg style="left:1515px;top:396px" width="8" height="6" viewBox="0 0 8 6"><path d="M1 1l3 3 3-3" fill="none" stroke="#6d7482" stroke-width="1.300"/></svg>
<svg style="left:1515px;top:590px" width="8" height="6" viewBox="0 0 8 6"><path d="M1 1l3 3 3-3" fill="none" stroke="#6d7482" stroke-width="1.300"/></svg>

<div class="tile" style="left:1540px;top:379px"><div>Architectural<b>●●●</b></div><svg viewBox="0 0 40 40"><use href="#i-arch"/></svg></div>
<div class="tile" style="left:1694px;top:379px"><div>Structural Engineering<b>●●●</b></div><svg viewBox="0 0 40 40"><use href="#i-str"/></svg></div>
<div class="tile" style="left:1849px;top:379px"><div>Civil Engineering<b>●●●</b></div><svg viewBox="0 0 40 40"><use href="#i-civ"/></svg></div>
<div class="tile" style="left:1540px;top:509px"><div>Electrical Services<b>●●●</b></div><svg viewBox="0 0 40 40"><use href="#i-ele"/></svg></div>
<div class="tile" style="left:1694px;top:509px"><div>Hydraulic Services<b>●●●</b></div><svg viewBox="0 0 40 40"><use href="#i-hyd"/></svg></div>
<div class="tile" style="left:1849px;top:509px"><div>Mechanical Services<b>●●●</b></div><svg viewBox="0 0 40 40"><use href="#i-mec"/></svg></div>
<div class="tile" style="left:1540px;top:639px"><div>Fire Services<b>●●●</b></div><svg viewBox="0 0 40 40"><use href="#i-fir"/></svg></div>
<div class="tile" style="left:1694px;top:639px"><div>Vertical Transport<b>●●●</b></div><svg viewBox="0 0 40 40"><use href="#i-ver"/></svg></div>
<div class="tile" style="left:1849px;top:639px"><div>Landscaping<b>●●●</b></div><svg viewBox="0 0 40 40"><use href="#i-lan"/></svg></div>

<!-- defects panel -->
<div class="b" style="left:10px;top:556px;width:210px;height:40px;background:#f1f2f6;border-radius:26px 0 0 0"></div>
<div class="b" style="left:10px;top:573px;width:16px;height:479px;background:#f1f2f6"></div>
<div class="b" style="left:10px;top:1046px;width:530px;height:6px;background:linear-gradient(90deg,#f1f2f6 0,#f1f2f6 85%,#fff 100%);border-radius:0 0 0 26px"></div>
<div class="b" style="left:10px;top:1020px;width:30px;height:32px;background:#f1f2f6;border-radius:0 0 0 26px"></div>
<div class="b" style="left:26px;top:573px;width:542px;height:473px;background:#fff;overflow:hidden" id="pan">

<!-- card 1 -->
<div class="card" style="left:16px;top:8px;width:254px;height:263px">
<div class="img"><svg viewBox="0 0 252 126" preserveAspectRatio="none"><defs><pattern id="dt" width="12.800" height="11.900" patternUnits="userSpaceOnUse" x="2" y="3"><circle cx="6.400" cy="6" r="3.500" fill="#9d9a90"/></pattern><linearGradient id="g1" x1="0" y1="0" x2="1" y2="0"><stop offset="0" stop-color="#000" stop-opacity=".55"/><stop offset=".65" stop-color="#000" stop-opacity="0"/></linearGradient><linearGradient id="g1b" x1="0" y1="0" x2="0" y2="1"><stop offset="0" stop-color="#3e3d3c"/><stop offset=".7" stop-color="#383736"/><stop offset="1" stop-color="#2a2928"/></linearGradient></defs><rect width="252" height="126" fill="url(#g1b)"/><rect width="224" height="100" fill="url(#dt)"/><rect x="107" y="61" width="36" height="10" fill="#3a3938"/><rect width="252" height="126" fill="url(#g1)"/><path d="M105 66l40 3 30 4 45 0 32 3" stroke="#111" stroke-width="1.200" fill="none"/></svg></div>
<div class="tag" style="left:8px;width:43px;background:#c62c2e;color:#fbe9e9">Open</div>
<div class="tag" style="left:60px;width:37px;background:rgba(90,40,30,.35);color:#c62d2d">High</div>
<div class="act" style="left:155px"><svg style="left:8px" viewBox="0 0 24 24"><use href="#eye"/></svg><svg style="left:37px" viewBox="0 0 24 24"><use href="#pen"/></svg><svg style="left:67px" viewBox="0 0 24 24"><use href="#box"/></svg></div>
<div class="cat" style="left:11px;top:134px">Tactiles</div>
<div class="ttl" style="left:11px;top:151px">Tactiles Missing</div>
<div class="b" style="left:11px;top:178px;width:231px;height:1px;background:#e5e7ec"></div>
<div class="lb" style="left:11px;top:183px">Assigned to:</div><div class="lb" style="left:152px;top:183px">Due date:</div>
<div class="t" style="left:11px;top:204px;width:28px;height:28px;border-radius:50%;background:#5a05d8;color:#111;font-size:13px;line-height:28px;text-align:center">SM</div>
<div class="vl nm" style="left:42px;top:204px">Sarah Mullins</div><div class="vl" style="left:152px;top:204px">27/02/2023</div>
<div class="sm" style="left:42px;top:220px">TSE Consultants</div><div class="sm" style="left:152px;top:220px">6 Days Left</div>
</div>

<!-- card 2 -->
<div class="card" style="left:282px;top:8px;width:254px;height:263px;box-shadow:0 4px 8px rgba(90,100,120,.22)">
<div class="img"><svg class="s" viewBox="0 0 252 126" preserveAspectRatio="none"><defs><linearGradient id="g2" x1="0" y1="0" x2="1" y2="0"><stop offset="0" stop-color="#0d0f12"/><stop offset=".22" stop-color="#25272a"/><stop offset=".42" stop-color="#7b7c7a"/><stop offset=".6" stop-color="#a8a69e"/><stop offset=".82" stop-color="#a6a39b"/><stop offset="1" stop-color="#8a8c91"/></linearGradient></defs><rect width="252" height="126" fill="url(#g2)"/><path d="M0 0h252v8H0z" fill="#000" opacity=".25"/><path d="M20 0v126M40 0v90M50 0v126M5 40h55M5 70h50" stroke="#4a4a47" stroke-width="2" fill="none"/><path d="M0 126L55 95l60-20h137v51z" fill="#6d7480"/><rect x="212" y="0" width="14" height="78" fill="#75777a"/><rect x="232" y="26" width="20" height="52" fill="#bfc1c2"/><path d="M70 40L56 26" stroke="#7a5e4a" stroke-width="3"/>
<path d="M58 43l20-6 8 16-1 26-27-2z" fill="#c2571c"/><path d="M58 60l27 3v3l-27-3zM58 69l27 3v3l-27-3z" fill="#b8a62e"/><path d="M58 78l27 2 8 46H76l-4-30-2 30H62z" fill="#0f1a2c"/><circle cx="78" cy="29" r="7" fill="#b5641c"/>
<path d="M105 24l22-3 10 30 0 22-32 2z" fill="#a6a82a"/><path d="M105 74l26-2-4 12-18 42h-11z" fill="#0e1c2a"/><circle cx="113" cy="10" r="7" fill="#a79f2c"/><path d="M128 30l8 16-12 4" stroke="#a08a74" stroke-width="5" fill="none"/>
<path d="M103 126c-2-30 18-53 44-53 22 0 38 22 41 53z" fill="#b5591c"/><path d="M125 88c8-10 24-12 38-6l-3 18c-12-6-24-4-30 2z" fill="#c4947c"/></svg></div>
<div class="tag" style="left:8px;width:43px;background:#c62c2e;color:#fbe9e9">Open</div>
<div class="tag" style="left:60px;width:37px;background:rgba(90,40,30,.35);color:#c62d2d">High</div>
<div class="act" style="left:155px"><svg style="left:8px" viewBox="0 0 24 24"><use href="#eye"/></svg><svg style="left:37px" viewBox="0 0 24 24"><use href="#pen"/></svg><svg style="left:67px" viewBox="0 0 24 24"><use href="#box"/></svg></div>
<div class="cat" style="left:10px;top:134px">Plastering</div>
<div class="ttl" style="left:10px;top:151px">Gyprock is broken and needs</div><div class="ttl" style="left:10px;top:171px">patching</div>
<div class="b" style="left:10px;top:198px;width:232px;height:1px;background:#e5e7ec"></div>
<div class="lb" style="left:10px;top:203px">Assigned to:</div><div class="lb" style="left:152px;top:203px">Due date:</div>
<div class="t" style="left:10px;top:224px;width:28px;height:28px;border-radius:50%;background:#c9f77e;color:#1c2a12;font-size:13px;line-height:28px;text-align:center">BC</div>
<div class="vl nm" style="left:41px;top:223px">Brad Cooper</div><div class="vl" style="left:152px;top:223px">23/03/2023</div>
<div class="sm" style="left:41px;top:239px">Hydro Plumbing Sol...</div><div class="sm" style="left:152px;top:239px">30 Days Left</div>
</div>

<!-- card 3 -->
<div class="card" style="left:16px;top:284px;width:254px;height:263px">
<div class="img"><svg class="s" viewBox="0 0 252 126" preserveAspectRatio="none"><defs><linearGradient id="g3" x1="0" y1="0" x2="0" y2="1"><stop offset="0" stop-color="#2d2824"/><stop offset=".12" stop-color="#4e443a"/><stop offset=".55" stop-color="#645a4d"/><stop offset=".75" stop-color="#4a3f33"/><stop offset="1" stop-color="#352c23"/></linearGradient></defs><rect width="252" height="126" fill="url(#g3)"/><path d="M0 0h252v10H0z" fill="#1d1a18"/><path d="M0 10h252" stroke="#3a3530" stroke-width="3"/><rect x="160" y="13" width="72" height="18" fill="#6f675b"/><rect x="163" y="40" width="40" height="35" fill="#35322f"/><rect x="218" y="32" width="22" height="48" fill="#7c7366"/><rect x="237" y="48" width="15" height="56" fill="#0e0f14"/><rect x="20" y="33" width="70" height="40" fill="#5a5d62" opacity=".45"/><rect x="10" y="50" width="60" height="30" fill="#4a4137" opacity=".5"/><rect x="175" y="78" width="63" height="16" fill="#55606a"/><path d="M5 105l35-15 15-8 25 6 25 12-12 10-30 14H8z" fill="#241e19"/><path d="M40 108l30-8 15 14-25 10H30z" fill="#4a3425"/><rect x="95" y="70" width="20" height="22" fill="#4d3b2d"/></svg></div>
<div class="tag" style="left:8px;width:43px;background:#c62c2e;color:#fbe9e9">Open</div>
<div class="tag" style="left:60px;width:56px;background:rgba(120,80,50,.5);color:#e27b30">Medium</div>
<div class="act" style="left:155px"><svg style="left:8px" viewBox="0 0 24 24"><use href="#eye"/></svg><svg style="left:37px" viewBox="0 0 24 24"><use href="#pen"/></svg><svg style="left:67px" viewBox="0 0 24 24"><use href="#box"/></svg></div>
<div class="cat" style="left:11px;top:134px">Waste</div>
<div class="ttl" style="left:11px;top:151px">Rubbish needs to be removed</div><div class="ttl" style="left:11px;top:171px">from lvl 16</div>
</div>

<!-- card 4 -->
<div class="card" style="left:282px;top:284px;width:254px;height:263px">
<div class="img"><svg viewBox="0 0 252 126" preserveAspectRatio="none"><rect width="252" height="126" fill="#0b0e01"/><path d="M0 0h98v93H0z" fill="#0e1300"/><path d="M0 93h98v33H0z" fill="#2a2620"/><path d="M22 96h34l-12 30H22z" fill="#0e0d0b"/><rect x="98" y="0" width="13" height="126" fill="#3b2c25"/><rect x="111" y="0" width="4" height="126" fill="#6a6e6c"/><path d="M115 0h30v88h-30z" fill="#1a2300"/><path d="M115 88h28v38h-28z" fill="#3f3d38"/><path d="M178 0h74v126h-108z" fill="#26363f"/><path d="M210 126L252 40v86z" fill="#5f6f7a"/><path d="M188 0l-40 126M200 0l-36 126M222 0l-30 126M245 0l-28 126" stroke="#7f94a3" stroke-width="1.500" fill="none"/></svg></div>
<div class="tag" style="left:8px;width:76px;background:#1180c2;color:#d5ecfb">In Progress</div>
<div class="tag" style="left:92px;width:36px;background:rgba(30,70,100,.5);color:#2694d8">Low</div>
<div class="act" style="left:155px"><svg style="left:8px" viewBox="0 0 24 24"><use href="#eye"/></svg><svg style="left:37px" viewBox="0 0 24 24"><use href="#pen"/></svg><svg style="left:67px" viewBox="0 0 24 24"><use href="#box"/></svg></div>
<div class="cat" style="left:10px;top:134px">Blinds</div>
<div class="ttl" style="left:10px;top:151px">Blind not centre</div>
<div class="b" style="left:10px;top:178px;width:232px;height:1px;background:#e5e7ec"></div>
<div class="lb" style="left:10px;top:183px">Assigned to:</div><div class="lb" style="left:152px;top:183px">Due date:</div>
</div>
</div>
</body></html>
